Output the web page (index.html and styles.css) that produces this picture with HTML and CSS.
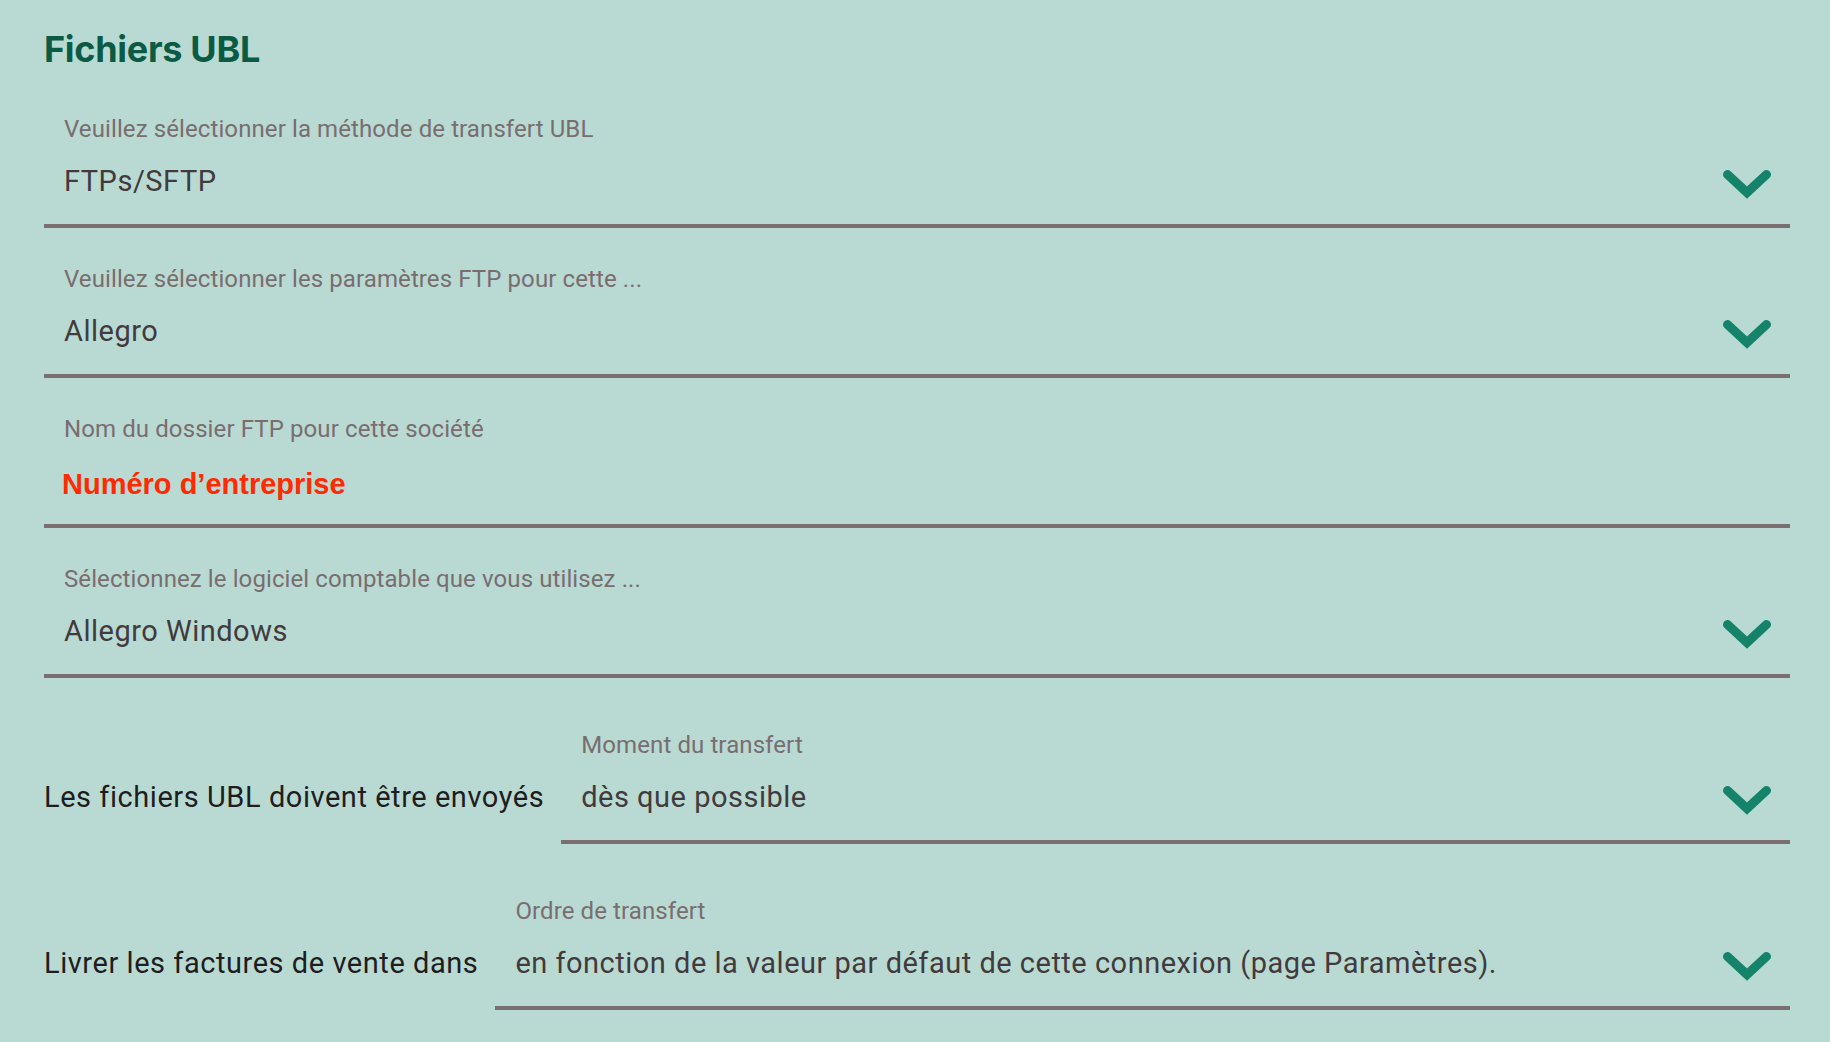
FILE: index.html
```html
<!DOCTYPE html>
<html lang="fr">
<head>
    <meta charset="UTF-8">
    <meta name="viewport" content="width=device-width, initial-scale=1.0">
    <title>Fichiers UBL</title>
    <link rel="stylesheet" href="styles.css">
</head>
<body>
    <div class="container">
        <h1>Fichiers UBL</h1>

        <div class="field">
            <div class="field-label">Veuillez sélectionner la méthode de transfert UBL</div>
            <div class="field-value">
                <span>FTPs/SFTP</span>
                <svg class="chevron" viewBox="0 0 48 29"><path d="M4.5 4.5 L24 22.6 L43.5 4.5"/></svg>
            </div>
        </div>

        <div class="field">
            <div class="field-label">Veuillez sélectionner les paramètres FTP pour cette ...</div>
            <div class="field-value">
                <span>Allegro</span>
                <svg class="chevron" viewBox="0 0 48 29"><path d="M4.5 4.5 L24 22.6 L43.5 4.5"/></svg>
            </div>
        </div>

        <div class="field">
            <div class="field-label">Nom du dossier FTP pour cette société</div>
            <div class="field-value">
                <span class="placeholder-note">Numéro d’entreprise</span>
            </div>
        </div>

        <div class="field">
            <div class="field-label">Sélectionnez le logiciel comptable que vous utilisez ...</div>
            <div class="field-value">
                <span>Allegro Windows</span>
                <svg class="chevron" viewBox="0 0 48 29"><path d="M4.5 4.5 L24 22.6 L43.5 4.5"/></svg>
            </div>
        </div>

        <div class="inline-row">
            <div class="inline-text">Les fichiers UBL doivent être envoyés</div>
            <div class="field">
                <div class="field-label">Moment du transfert</div>
                <div class="field-value">
                    <span>dès que possible</span>
                    <svg class="chevron" viewBox="0 0 48 29"><path d="M4.5 4.5 L24 22.6 L43.5 4.5"/></svg>
                </div>
            </div>
        </div>

        <div class="inline-row">
            <div class="inline-text">Livrer les factures de vente dans</div>
            <div class="field">
                <div class="field-label">Ordre de transfert</div>
                <div class="field-value">
                    <span>en fonction de la valeur par défaut de cette connexion (page Paramètres).</span>
                    <svg class="chevron" viewBox="0 0 48 29"><path d="M4.5 4.5 L24 22.6 L43.5 4.5"/></svg>
                </div>
            </div>
        </div>
    </div>
</body>
</html>
```

FILE: styles.css
```css
* {
    margin: 0;
    padding: 0;
    box-sizing: border-box;
}

body {
    background-color: #b8dad3;
    font-family: 'Roboto', 'Liberation Sans', sans-serif;
    color: #423a3c;
}

.container {
    padding: 27px 40px 0 44px;
}

h1 {
    font-family: 'Inter', 'Liberation Sans', sans-serif;
    font-size: 36px;
    line-height: 44px;
    font-weight: 700;
    color: #0b5b44;
    letter-spacing: -0.3px;
    margin-bottom: 7px;
}

.field {
    padding: 37px 19px 26px 20px;
    border-bottom: 4px solid #7b6e70;
}

.field-label {
    font-size: 24px;
    line-height: 28px;
    letter-spacing: 0.1px;
    color: #7a6d70;
}

.field-value {
    display: flex;
    justify-content: space-between;
    align-items: center;
    height: 34px;
    margin-top: 21px;
    font-size: 29px;
    line-height: 34px;
    letter-spacing: 0.5px;
}

.chevron {
    width: 48px;
    height: 29px;
    margin-top: 6px;
    flex-shrink: 0;
}

.chevron path {
    fill: none;
    stroke: #14836a;
    stroke-width: 9;
    stroke-linecap: round;
    stroke-linejoin: miter;
}

.placeholder-note {
    font-family: 'Liberation Sans', Arial, sans-serif;
    font-weight: 700;
    font-size: 29px;
    letter-spacing: 0;
    color: #ff2a00;
    margin-left: -2px;
    margin-top: 6px;
}

.inline-row {
    display: flex;
    align-items: flex-end;
    gap: 17px;
}

.inline-row .field {
    flex: 1;
    padding-top: 53px;
}

.inline-text {
    font-size: 29px;
    line-height: 34px;
    letter-spacing: 0.55px;
    color: #1f1d1e;
    margin-bottom: 30px;
    white-space: nowrap;
}
```
